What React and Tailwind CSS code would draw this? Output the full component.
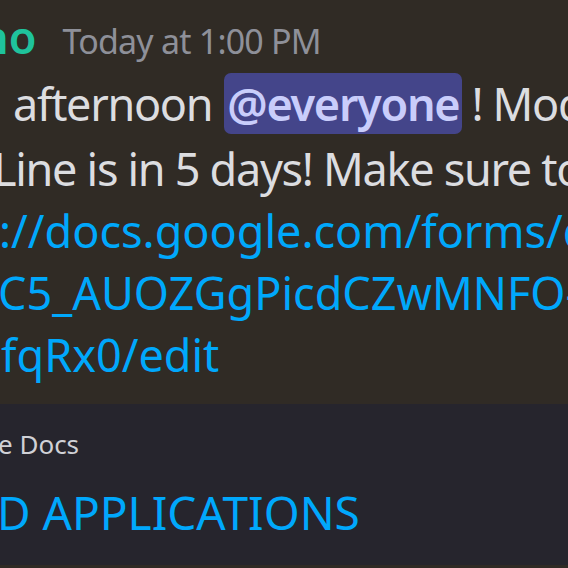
const font = { fontFamily: '"Noto Sans", "Open Sans", sans-serif' };

function Mention({ children }) {
  return (
    <span className="ml-[12px] mr-[9px] rounded-[7px] bg-[#44458a] px-[3px] font-semibold text-[#c9cdfb]">
      {children}
    </span>
  );
}

export default function App() {
  return (
    <div
      className="flex h-[568px] w-[568px] flex-col overflow-hidden bg-[#302b25]"
      style={font}
    >
      <div className="flex flex-col pt-[5px]">
        <div className="flex items-baseline whitespace-nowrap leading-[63px]">
          <span className="-ml-[20px] text-[45px] font-semibold text-[#1fc39c]">no</span>
          <span className="ml-[26px] text-[34px] tracking-[-0.8px] text-[#8e9099]">Today at 1:00 PM</span>
        </div>
        <div className="flex flex-col whitespace-nowrap text-[45px] leading-[62px] text-[#dcdde0]">
          <div className="pl-[13px] tracking-[-1.3px]">
            afternoon<Mention>@everyone</Mention>! Moderator
          </div>
          <div className="-ml-[7px] mt-[3px] tracking-[-1.3px]">Line is in 5 days! Make sure to fill</div>
          <div className="-ml-[1px] text-[#00a8fc]">://docs.google.com/forms/d/e/</div>
          <div className="-ml-[2px] text-[#00a8fc]">C5_AUOZGgPicdCZwMNFO-</div>
          <div className="ml-[1px] text-[#00a8fc]">fqRx0/edit</div>
        </div>
      </div>
      <div className="mt-[18px] flex h-[161px] flex-col bg-[#26252d] whitespace-nowrap">
        <div className="-ml-[2px] mt-[22px] text-[26px] leading-[36px] text-[#d0d1d6]">e Docs</div>
        <div className="-ml-[3px] mt-[22px] text-[46px] leading-[56px] text-[#00a8fc]">
          D APPLICATIONS
        </div>
      </div>
    </div>
  );
}
